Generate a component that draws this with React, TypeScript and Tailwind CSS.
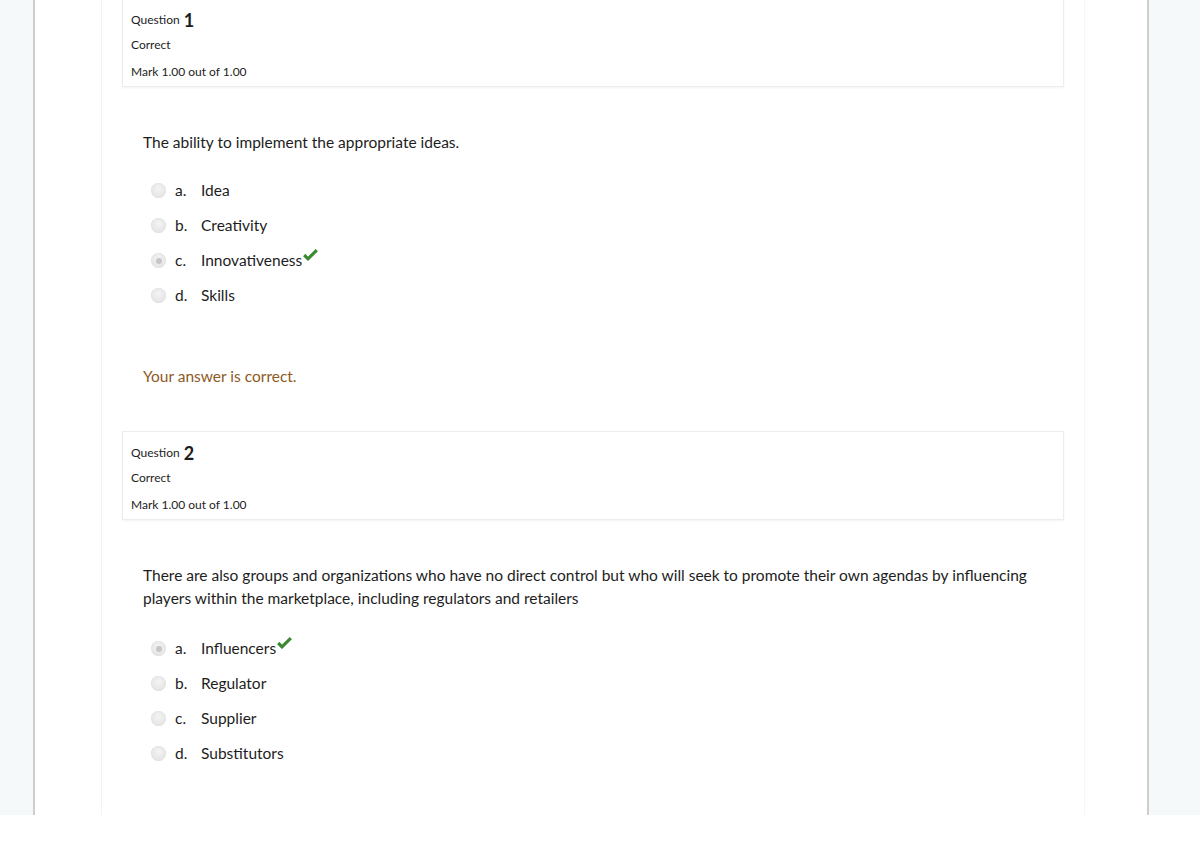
import React from "react";

type Question = {
  number: number;
  text: string[];
  options: { letter: string; label: string; correct?: boolean }[];
  feedback?: string;
};

const questions: Question[] = [
  {
    number: 1,
    text: ["The ability to implement the appropriate ideas."],
    options: [
      { letter: "a.", label: "Idea" },
      { letter: "b.", label: "Creativity" },
      { letter: "c.", label: "Innovativeness", correct: true },
      { letter: "d.", label: "Skills" },
    ],
    feedback: "Your answer is correct.",
  },
  {
    number: 2,
    text: [
      "There are also groups and organizations who have no direct control but who will seek to promote their own agendas by influencing",
      "players within the marketplace, including regulators and retailers",
    ],
    options: [
      { letter: "a.", label: "Influencers", correct: true },
      { letter: "b.", label: "Regulator" },
      { letter: "c.", label: "Supplier" },
      { letter: "d.", label: "Substitutors" },
    ],
  },
];

const Check = () => (
  <svg width="15" height="12" viewBox="0 0 15 12" className="-mt-[12px] ml-[1px]">
    <path d="M1.2 6 L5 9.8 L13.8 1.2" fill="none" stroke="#3b8a32" strokeWidth="3.2" />
  </svg>
);

const Radio = ({ checked }: { checked?: boolean }) => (
  <span className="w-[15px] h-[15px] rounded-full bg-[radial-gradient(circle_at_50%_40%,#f4f4f4,#dedede)] shadow-[inset_0_0_1px_#d2d2d2] flex items-center justify-center">
    {checked && <span className="w-[6px] h-[6px] rounded-full bg-[#c6c6c6]" />}
  </span>
);

const InfoBox = ({ n }: { n: number }) => (
  <div className="mx-[20px] border border-[#ededed] shadow-[0_1px_2px_rgba(0,0,0,0.05)] pl-[8px] pt-[9px] text-[12px] text-[#1d1d1d]">
    <div className="h-[24px] flex items-center">
      Question <span className="ml-[4px] text-[18px] font-bold">{n}</span>
    </div>
    <div className="h-[26px] flex items-center">Correct</div>
    <div className="h-[28px] flex items-center">Mark 1.00 out of 1.00</div>
  </div>
);

const QuestionBlock = ({ q, first }: { q: Question; first?: boolean }) => (
  <div className={first ? "-mt-[2px]" : ""}>
    <InfoBox n={q.number} />
    <div className="pl-[41px] pt-[44px] text-[15.5px] text-[#1d1d1d]">
      <div className="leading-[23px]">
        {q.text.map((t) => (
          <div key={t}>{t}</div>
        ))}
      </div>
      <div className={q.text.length > 1 ? "mt-[21px]" : "mt-[19px]"}>
        {q.options.map((o) => (
          <div key={o.letter} className="h-[35px] flex items-center">
            <span className="ml-[8px]">
              <Radio checked={o.correct} />
            </span>
            <span className="ml-[9px] w-[26px]">{o.letter}</span>
            <span>{o.label}</span>
            {o.correct && <Check />}
          </div>
        ))}
      </div>
      {q.feedback ? (
        <div className="mt-[52px] h-[23px] flex items-center text-[#8d5a1e]">{q.feedback}</div>
      ) : null}
    </div>
    {q.feedback ? <div className="h-[43px]" /> : null}
  </div>
);

export default function App() {
  return (
    <div className="w-[1200px] h-[848px] bg-white overflow-hidden font-['Lato',sans-serif]">
      <div className="h-[815px] flex">
        <div className="w-[33px] bg-[#f6f9f9]" />
        <div className="w-[2px] bg-[#cdcdcd]" />
        <div className="flex-1 bg-white flex">
          <div className="w-[67px] border-r border-[#f3f3f3]" />
          <div className="w-[983px] border-r border-[#f6f6f6] overflow-hidden">
            {questions.map((q, i) => (
              <QuestionBlock key={q.number} q={q} first={i === 0} />
            ))}
          </div>
        </div>
        <div className="w-[2px] bg-[#cdcdcd]" />
        <div className="w-[51px] bg-[#f6f9f9]" />
      </div>
    </div>
  );
}
